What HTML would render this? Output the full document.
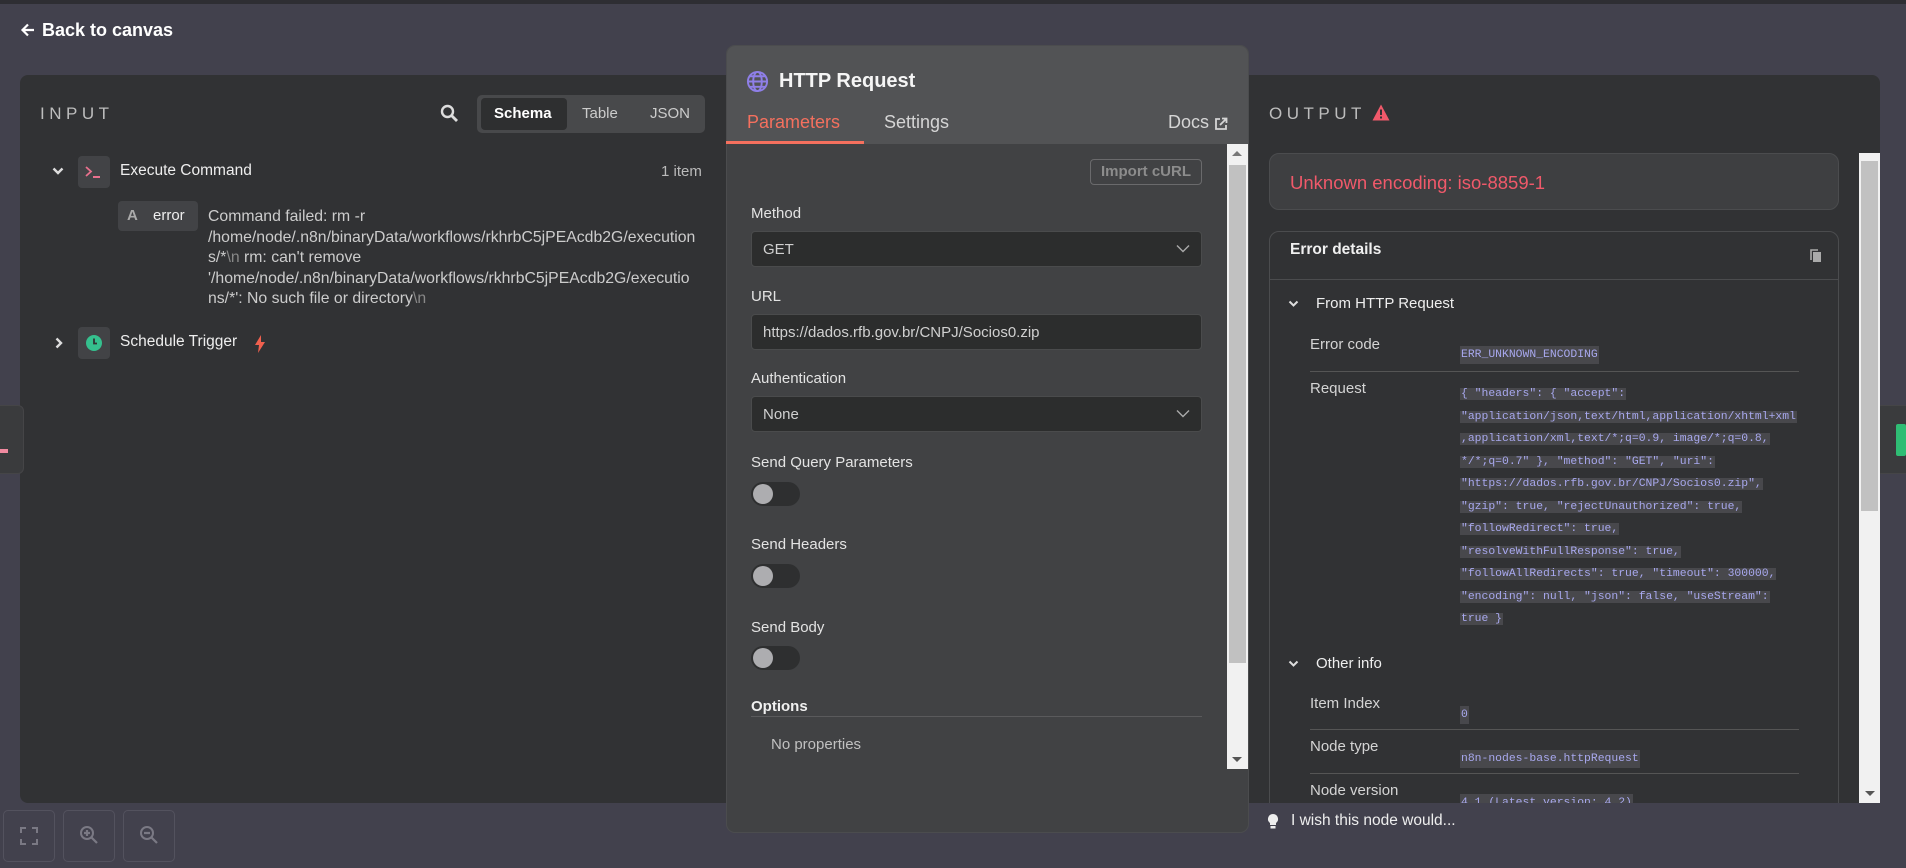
<!DOCTYPE html>
<html><head><meta charset="utf-8"><style>
*{margin:0;padding:0;box-sizing:border-box}
body{width:1906px;height:868px;overflow:hidden;background:#42414d;font-family:"Liberation Sans",sans-serif;position:relative;color:#e6e6e6}
.a{position:absolute;white-space:nowrap}
.topbar{left:0;top:0;width:1906px;height:4px;background:#2e2e33}
.main{left:20px;top:75px;width:1860px;height:728px;background:#313234;border-radius:8px}
.lbl{font-size:15px;color:#e3e3e3}
.sel{background:#2c2d2d;border:1px solid #4a4b4c;border-radius:4px;height:36px;width:451px;left:751px;font-size:15px;color:#d0d0d0;padding:9px 11px}
.tog{width:49px;height:24px;border-radius:12px;background:#2e2f30;left:751px}
.tog:after{content:"";position:absolute;left:2px;top:2px;width:20px;height:20px;border-radius:50%;background:#adadb0}
.code{font-family:"Liberation Mono",monospace;font-size:11.4px;color:#a8a8ee;background:#48484c;line-height:18px;padding:0 1px}
.olbl{font-size:15px;color:#d4d4d4}
.div{height:1px;background:#555}
.btn{width:52px;height:52px;border:1px solid #53525e;border-radius:5px;top:810px}
</style></head><body>
<div class="a topbar"></div>
<div class="a" style="left:20px;top:20px;font-size:18px;font-weight:bold;color:#fff">
<svg width="16" height="16" viewBox="0 0 16 16" style="vertical-align:-2px;margin-right:6px"><path d="M14 8H3M8 2.5L2.5 8 8 13.5" stroke="#fff" stroke-width="2.2" fill="none"/></svg>Back to canvas</div>
<div class="a main"></div>
<div class="a" style="left:-6px;top:405px;width:30px;height:69px;background:#3a3b3d;border-radius:6px;border:1px solid #454547"></div>
<div class="a" style="left:0;top:449px;width:8px;height:4px;background:#f08aa0"></div>
<div class="a" style="left:1875px;top:405px;width:40px;height:69px;background:#3a3b3d;border-radius:6px;border:1px solid #454547"></div>
<div class="a" style="left:1896px;top:424px;width:10px;height:32px;background:#2fbd74;border-radius:2px"></div>

<div class="a" style="left:40px;top:104px;font-size:17px;letter-spacing:4.5px;color:#bdbdbd">INPUT</div>
<svg class="a" style="left:440px;top:104px" width="19" height="19" viewBox="0 0 19 19"><circle cx="7.5" cy="7.5" r="5.5" stroke="#ddd" stroke-width="2.4" fill="none"/><path d="M11.5 11.5L17 17" stroke="#ddd" stroke-width="2.8"/></svg>
<div class="a" style="left:477px;top:95px;width:228px;height:38px;background:#48494b;border-radius:5px"></div>
<div class="a" style="left:481px;top:98px;width:86px;height:32px;background:#2e2f30;border-radius:4px"></div>
<div class="a" style="left:494px;top:105px;font-size:15px;font-weight:bold;color:#fff">Schema</div>
<div class="a" style="left:582px;top:105px;font-size:15px;color:#ccc">Table</div>
<div class="a" style="left:650px;top:105px;font-size:15px;color:#ccc">JSON</div>

<svg class="a" style="left:52px;top:166px" width="12" height="10" viewBox="0 0 12 10"><path d="M1.5 2.5L6 7l4.5-4.5" stroke="#ddd" stroke-width="2.4" fill="none"/></svg>
<div class="a" style="left:78px;top:156px;width:32px;height:32px;background:#424346;border-radius:4px"></div>
<svg class="a" style="left:84px;top:164px" width="20" height="16" viewBox="0 0 20 16"><path d="M2 3l5 4.5L2 12" stroke="#e9718e" stroke-width="1.8" fill="none"/><path d="M9 13h7" stroke="#e9718e" stroke-width="2"/></svg>
<div class="a" style="left:120px;top:162px;font-size:15.5px;color:#eee">Execute Command</div>
<div class="a" style="left:661px;top:163px;font-size:15px;color:#bbb">1 item</div>
<div class="a" style="left:118px;top:201px;width:80px;height:30px;background:#424346;border-radius:4px"></div>
<div class="a" style="left:127px;top:207px;font-size:15px;color:#aaa;font-weight:bold">A</div>
<div class="a" style="left:153px;top:207px;font-size:15px;color:#eee">error</div>
<div class="a" style="left:208px;top:207px;font-size:15.8px;line-height:20.5px;color:#ccc">Command failed: rm -r<br>/home/node/.n8n/binaryData/workflows/rkhrbC5jPEAcdb2G/execution<br>s/*<span style="color:#888">\n</span> rm: can't remove<br>'/home/node/.n8n/binaryData/workflows/rkhrbC5jPEAcdb2G/executio<br>ns/*': No such file or directory<span style="color:#888">\n</span></div>
<svg class="a" style="left:54px;top:337px" width="10" height="12" viewBox="0 0 10 12"><path d="M2.5 1.5L7 6l-4.5 4.5" stroke="#ddd" stroke-width="2.4" fill="none"/></svg>
<div class="a" style="left:78px;top:327px;width:32px;height:32px;background:#424346;border-radius:4px"></div>
<svg class="a" style="left:85px;top:334px" width="18" height="18" viewBox="0 0 18 18"><circle cx="9" cy="9" r="8" fill="#35c08e"/><path d="M9 4.5V9.5h3" stroke="#313234" stroke-width="1.8" fill="none"/></svg>
<div class="a" style="left:120px;top:333px;font-size:15.5px;color:#eee">Schedule Trigger</div>
<svg class="a" style="left:254px;top:335px" width="12" height="18" viewBox="0 0 12 18"><path d="M7 0L1 10h4l-1 8 7-11H7z" fill="#f0604e"/></svg>

<div class="a" style="left:726px;top:45px;width:523px;height:788px;background:#414244;border-radius:9px;border:1px solid #4b4c4e;overflow:hidden">
<div class="a" style="left:0;top:0;width:523px;height:98px;background:#525355"></div>
</div>
<svg class="a" style="left:746px;top:70px" width="23" height="23" viewBox="0 0 24 24"><g stroke="#8f7fe8" stroke-width="2" fill="none"><circle cx="12" cy="12" r="10"/><ellipse cx="12" cy="12" rx="4.5" ry="10"/><path d="M2 12h20M4 6.5h16M4 17.5h16"/></g></svg>
<div class="a" style="left:779px;top:70px;font-size:20px;font-weight:bold;color:#f5f5f5">HTTP Request</div>
<div class="a" style="left:747px;top:112px;font-size:18px;color:#f5705e">Parameters</div>
<div class="a" style="left:726px;top:141px;width:138px;height:3px;background:#f5705e"></div>
<div class="a" style="left:884px;top:112px;font-size:18px;color:#d5d5d5">Settings</div>
<div class="a" style="left:1168px;top:112px;font-size:18px;color:#d5d5d5">Docs</div>
<svg class="a" style="left:1214px;top:117px" width="14" height="14" viewBox="0 0 14 14"><path d="M6 2H2v10h10V8M8 1.5h4.5V6M12.5 1.5L6 8" stroke="#d5d5d5" stroke-width="1.8" fill="none"/></svg>
<div class="a" style="left:1227px;top:144px;width:21px;height:625px;background:#f1f1f1"></div>
<div class="a" style="left:1229px;top:165px;width:17px;height:498px;background:#c1c1c1"></div>
<div class="a" style="left:1232px;top:151px;width:0;height:0;border:5px solid transparent;border-bottom:5px solid #777;border-top:0"></div>
<div class="a" style="left:1232px;top:757px;width:0;height:0;border:5px solid transparent;border-top:5px solid #555;border-bottom:0"></div>
<div class="a" style="left:1090px;top:159px;width:112px;height:26px;border:1px solid #6a6a6c;border-radius:4px;font-size:15px;font-weight:bold;color:#8c8c8c;text-align:center;line-height:24px">Import cURL</div>
<div class="a lbl" style="left:751px;top:205px">Method</div>
<div class="a sel" style="top:231px">GET</div>
<svg class="a" style="left:1176px;top:244px" width="14" height="9" viewBox="0 0 14 9"><path d="M1 1.5l6 6 6-6" stroke="#aaa" stroke-width="1.4" fill="none"/></svg>
<div class="a lbl" style="left:751px;top:288px">URL</div>
<div class="a sel" style="top:314px">https://dados.rfb.gov.br/CNPJ/Socios0.zip</div>
<div class="a lbl" style="left:751px;top:370px">Authentication</div>
<div class="a sel" style="top:396px">None</div>
<svg class="a" style="left:1176px;top:409px" width="14" height="9" viewBox="0 0 14 9"><path d="M1 1.5l6 6 6-6" stroke="#aaa" stroke-width="1.4" fill="none"/></svg>
<div class="a lbl" style="left:751px;top:454px">Send Query Parameters</div>
<div class="a tog" style="top:482px"></div>
<div class="a lbl" style="left:751px;top:536px">Send Headers</div>
<div class="a tog" style="top:564px"></div>
<div class="a lbl" style="left:751px;top:619px">Send Body</div>
<div class="a tog" style="top:646px"></div>
<div class="a lbl" style="left:751px;top:698px;font-weight:bold;color:#f0f0f0">Options</div>
<div class="a" style="left:751px;top:716px;width:451px;height:1px;background:#5a5a5c"></div>
<div class="a lbl" style="left:771px;top:736px;color:#c0c0c0">No properties</div>

<div class="a" style="left:1269px;top:104px;font-size:17px;letter-spacing:4.5px;color:#bdbdbd">OUTPUT</div>
<svg class="a" style="left:1372px;top:104px" width="18" height="17" viewBox="0 0 18 17"><path d="M9 0.5L17.5 16.5H0.5z" fill="#f0596a"/><path d="M9 5.5v5.5M9 12.5v2" stroke="#313234" stroke-width="2"/></svg>
<div class="a" style="left:1269px;top:153px;width:570px;height:57px;background:#3e3f41;border:1px solid #4b4c4e;border-radius:10px"></div>
<div class="a" style="left:1290px;top:172px;font-size:18.5px;color:#f0596a">Unknown encoding: iso-8859-1</div>
<div class="a" style="left:1269px;top:231px;width:570px;height:600px;border:1px solid #4b4c4e;border-radius:10px"></div>
<div class="a" style="left:1290px;top:241px;font-size:15.5px;font-weight:bold;color:#f0f0f0">Error details</div>
<svg class="a" style="left:1810px;top:249px" width="12" height="14" viewBox="0 0 12 14"><rect x="3" y="3" width="8" height="10" fill="#aaa"/><path d="M1 11V1h7" stroke="#aaa" stroke-width="1.6" fill="none"/></svg>
<div class="a" style="left:1270px;top:279px;width:568px;height:1px;background:#4b4c4e"></div>
<svg class="a" style="left:1288px;top:300px" width="11" height="8" viewBox="0 0 11 8"><path d="M1.5 1.5l4 4 4-4" stroke="#ddd" stroke-width="2" fill="none"/></svg>
<div class="a olbl" style="left:1316px;top:295px;color:#eee">From HTTP Request</div>
<div class="a olbl" style="left:1310px;top:336px">Error code</div>
<div class="a code" style="left:1460px;top:346px">ERR_UNKNOWN_ENCODING</div>
<div class="a div" style="left:1310px;top:371px;width:489px"></div>
<div class="a olbl" style="left:1310px;top:380px">Request</div>
<div class="a" style="left:1460px;top:381px;line-height:22.5px">
<span class="code">{ "headers": { "accept":</span><br><span class="code">"application/json,text/html,application/xhtml+xml</span><br><span class="code">,application/xml,text/*;q=0.9, image/*;q=0.8,</span><br><span class="code">*/*;q=0.7" }, "method": "GET", "uri":</span><br><span class="code">"https://dados.rfb.gov.br/CNPJ/Socios0.zip",</span><br><span class="code">"gzip": true, "rejectUnauthorized": true,</span><br><span class="code">"followRedirect": true,</span><br><span class="code">"resolveWithFullResponse": true,</span><br><span class="code">"followAllRedirects": true, "timeout": 300000,</span><br><span class="code">"encoding": null, "json": false, "useStream":</span><br><span class="code">true }</span></div>
<svg class="a" style="left:1288px;top:660px" width="11" height="8" viewBox="0 0 11 8"><path d="M1.5 1.5l4 4 4-4" stroke="#ddd" stroke-width="2" fill="none"/></svg>
<div class="a olbl" style="left:1316px;top:655px;color:#eee">Other info</div>
<div class="a olbl" style="left:1310px;top:695px">Item Index</div>
<div class="a code" style="left:1460px;top:706px">0</div>
<div class="a div" style="left:1310px;top:729px;width:489px"></div>
<div class="a olbl" style="left:1310px;top:738px">Node type</div>
<div class="a code" style="left:1460px;top:750px">n8n-nodes-base.httpRequest</div>
<div class="a div" style="left:1310px;top:773px;width:489px"></div>
<div class="a olbl" style="left:1310px;top:782px">Node version</div>
<div class="a code" style="left:1460px;top:794px">4.1 (Latest version: 4.2)</div>
<div class="a" style="left:1249px;top:803px;width:657px;height:65px;background:#42414d"></div>
<div class="a" style="left:1859px;top:153px;width:21px;height:650px;background:#f1f1f1"></div>
<div class="a" style="left:1861px;top:161px;width:17px;height:350px;background:#c1c1c1"></div>
<div class="a" style="left:1865px;top:791px;width:0;height:0;border:5px solid transparent;border-top:5px solid #555;border-bottom:0"></div>
<svg class="a" style="left:1267px;top:813px" width="12" height="17" viewBox="0 0 12 17"><path d="M6 1a5 5 0 0 0-3 9v2h6v-2a5 5 0 0 0-3-9z" fill="#eee"/><rect x="3.5" y="13" width="5" height="2.5" fill="#eee"/></svg>
<div class="a" style="left:1291px;top:812px;font-size:15.5px;color:#eee">I wish this node would...</div>

<div class="a btn" style="left:3px"></div>
<div class="a btn" style="left:63px"></div>
<div class="a btn" style="left:123px"></div>
<svg class="a" style="left:20px;top:827px" width="18" height="18" viewBox="0 0 18 18"><path d="M1 6V1h5M12 1h5v5M17 12v5h-5M6 17H1v-5" stroke="#7a7984" stroke-width="2" fill="none"/></svg>
<svg class="a" style="left:79px;top:825px" width="20" height="20" viewBox="0 0 20 20"><circle cx="8" cy="8" r="6" stroke="#7a7984" stroke-width="2" fill="none"/><path d="M12.5 12.5L18 18M5 8h6M8 5v6" stroke="#7a7984" stroke-width="2.2"/></svg>
<svg class="a" style="left:139px;top:825px" width="20" height="20" viewBox="0 0 20 20"><circle cx="8" cy="8" r="6" stroke="#7a7984" stroke-width="2" fill="none"/><path d="M12.5 12.5L18 18M5 8h6" stroke="#7a7984" stroke-width="2.2"/></svg>
</body></html>
